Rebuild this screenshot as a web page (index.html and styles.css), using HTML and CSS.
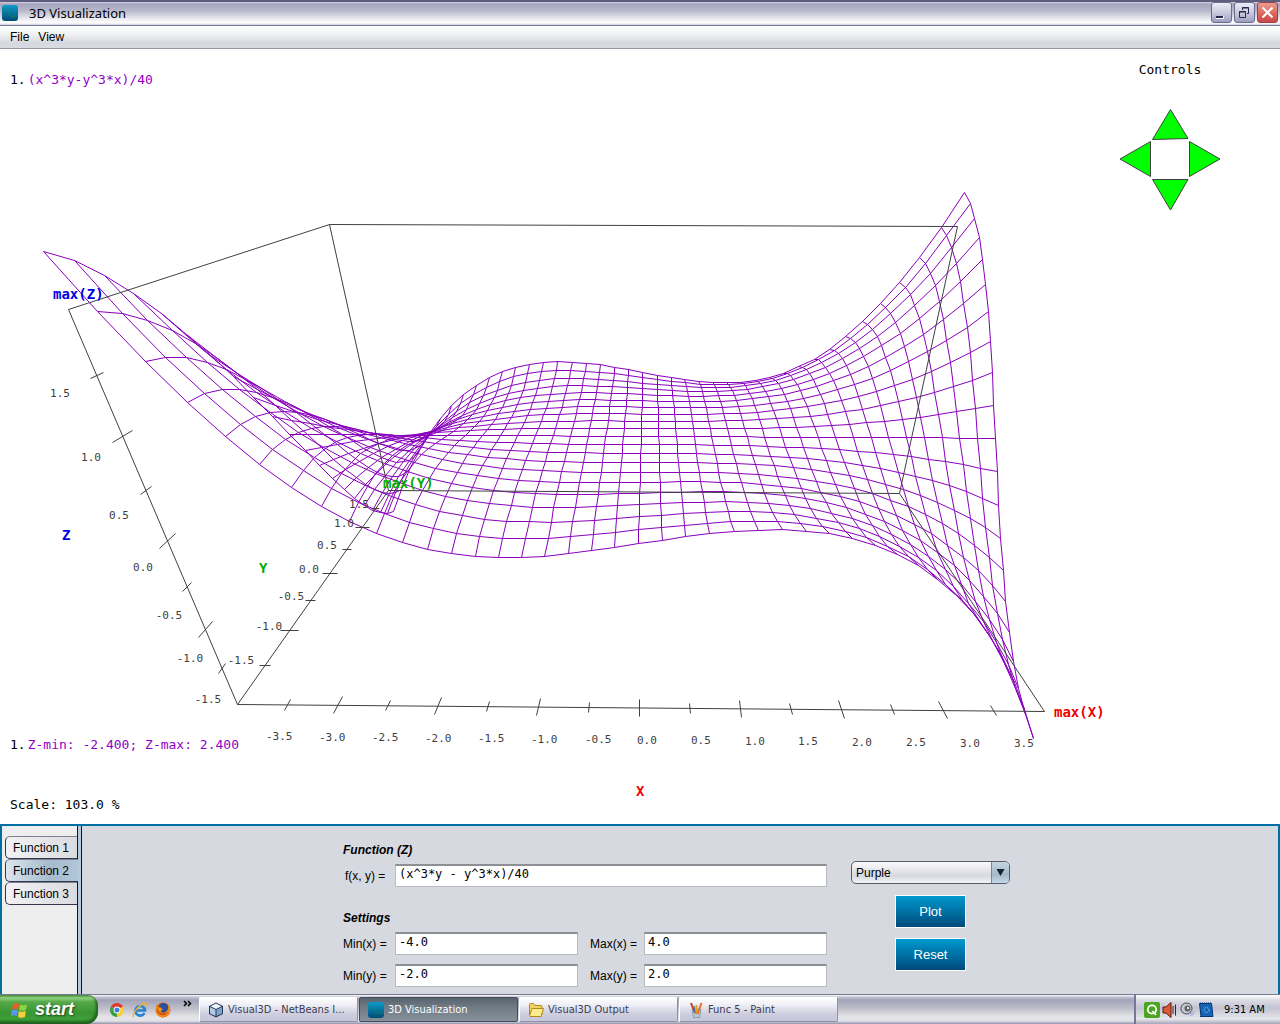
FILE: index.html
```
<!DOCTYPE html>
<html lang="en">
<head>
    <meta charset="UTF-8">
    <meta name="viewport" content="width=device-width, initial-scale=1.0">
    <title>3D Visualization</title>
    <link rel="stylesheet" href="styles.css">
</head>
<body>
    <header class="titlebar">
        <svg class="app-icon" viewBox="0 0 16 16"><use href="#appIcon"/></svg>
        <h1>3D Visualization</h1>
        <div class="window-buttons">
            <button type="button" class="win-btn" aria-label="Minimize">
                <svg viewBox="0 0 19 19"><path d="M4 13h8v3H4z" fill="#fff"/><path d="M4 13h7v2H4z" fill="#27294a"/></svg>
            </button>
            <button type="button" class="win-btn" aria-label="Restore">
                <svg viewBox="0 0 19 19" fill="none" stroke="#27294a"><path d="M7.500 7V4.500h6v6H12M7 5h7"/><path d="M4.500 8.500h6v6h-6zM4 9h7"/></svg>
            </button>
            <button type="button" class="win-btn win-close" aria-label="Close">
                <svg viewBox="0 0 19 19"><path d="M4.500 4.500l10 10M14.500 4.500l-10 10" stroke="#fff" stroke-width="2"/></svg>
            </button>
        </div>
    </header>

    <nav class="menubar">
        <button type="button">File</button>
        <button type="button">View</button>
    </nav>

    <main class="plot">
        <svg id="surface" class="surface" viewBox="0 49 1280 775"></svg>
        <p class="plot-text formula">1.<span>(x^3*y-y^3*x)/40</span></p>
        <p class="plot-text range">1.<span>Z-min: -2.400; Z-max: 2.400</span></p>
        <p class="plot-text scale">Scale: 103.0 %</p>
        <div class="controls">
            <p class="plot-text">Controls</p>
            <div class="pad">
                <button type="button" class="up" aria-label="Rotate up"><svg viewBox="0 0 38 32"><path d="M19.500 1.500L37 30.500L1.500 31.500z"/></svg></button>
                <button type="button" class="left" aria-label="Rotate left"><svg viewBox="0 0 32 38"><path d="M1 19L31.500 1.500V36.500z"/></svg></button>
                <button type="button" class="right" aria-label="Rotate right"><svg viewBox="0 0 32 38"><path d="M31 19L.5 1.500V36.500z"/></svg></button>
                <button type="button" class="down" aria-label="Rotate down"><svg viewBox="0 0 38 32"><path d="M19.500 31L37 .5H1.500z"/></svg></button>
            </div>
        </div>
    </main>

    <section class="panel">
        <div class="tabs">
            <button type="button">Function 1</button>
            <button type="button" class="selected">Function 2</button>
            <button type="button">Function 3</button>
        </div>
        <form class="settings">
            <div class="fields">
                <h2>Function (Z)</h2>
                <label for="fxy" class="indent">f(x, y) =</label>
                <input type="text" id="fxy" class="wide" value="(x^3*y - y^3*x)/40">
                <h2 class="second">Settings</h2>
                <label for="minX">Min(x) =</label>
                <input type="text" id="minX" value="-4.0">
                <label for="maxX" class="col-gap">Max(x) =</label>
                <input type="text" id="maxX" value="4.0">
                <label for="minY" class="row-gap">Min(y) =</label>
                <input type="text" id="minY" class="row-gap" value="-2.0">
                <label for="maxY" class="col-gap row-gap">Max(y) =</label>
                <input type="text" id="maxY" class="row-gap" value="2.0">
            </div>
            <div class="actions">
                <div class="combo">
                    <select aria-label="Colour">
                        <option>Purple</option>
                    </select>
                    <svg viewBox="0 0 17 21"><path d="M4.500 7h8l-4 7z" fill="#17222c"/></svg>
                </div>
                <button type="button">Plot</button>
                <button type="button">Reset</button>
            </div>
        </form>
    </section>

    <footer class="taskbar">
        <button type="button" class="start">
            <svg viewBox="0 0 18 18">
                <path d="M2 3.500q3-2 6-.5L7 8.500q-3-1.500-6 0z" fill="#e8602c"/>
                <path d="M9 3.500q3 1.500 7 0L15 9q-3 1.500-7 0z" fill="#8fd13f"/>
                <path d="M.8 9.500q3-1.500 6 0L5.800 15q-3-1.500-5.800 0z" fill="#5b94ee"/>
                <path d="M7.800 10q3 1.500 7 0L14 16q-4 1.500-7 0z" fill="#f7cf38"/>
            </svg>
            start
        </button>
        <div class="quick">
            <button type="button" aria-label="Chrome">
                <svg viewBox="0 0 16 16"><path d="M8 8L1.900 4.500A7 7 0 0 1 14.100 4.500z" fill="#dd3b2c"/><path d="M8 8L14.100 4.500A7 7 0 0 1 8 15z" fill="#f8cf35"/><path d="M8 8L8 15A7 7 0 0 1 1.900 4.500z" fill="#3c9e46"/><circle cx="8" cy="8" r="3.400" fill="#fff"/><circle cx="8" cy="8" r="2.500" fill="#3f7fd8"/></svg>
            </button>
            <button type="button" aria-label="Internet Explorer">
                <svg viewBox="0 0 16 16" fill="none"><path d="M12.500 11A4.800 4.800 0 1 1 13 8.500H4.500" stroke="#2583d8" stroke-width="2.600"/><path d="M1.500 15C-.5 12 7 3 12.500 1.500q3.500-.5 2 3" stroke="#f0b428" stroke-width="1.300"/></svg>
            </button>
            <button type="button" aria-label="Firefox">
                <svg viewBox="0 0 16 16"><circle cx="8" cy="8" r="7.500" fill="#e26a14"/><circle cx="8.500" cy="6" r="5" fill="#2c4f98"/><path d="M1 3q2 3 5 2.500L8 8q-3 .5-2 2 3 2 6-1 2-3 1-6 3 4 1.500 8-3 5-8 4.500Q0 13 1 3z" fill="#f28c1c"/><path d="M2 5q-1 6 4 8 5 1 7-3-4 2-7 1T2 5z" fill="#d24c10"/></svg>
            </button>
            <svg class="more" viewBox="0 0 9 7" fill="none" stroke="#000" stroke-width="1.500"><path d="M1 1l2.500 2.500L1 6M5 1l2.500 2.500L5 6"/></svg>
        </div>
        <div class="tasks">
            <button type="button">
                <svg viewBox="0 0 16 16"><path d="M8 .5l7 3.500v8l-7 3.500L1 12V4z" fill="#233a5c"/><path d="M8 1.500L13.500 4.200 8 7 2.500 4.200z" fill="#eef5fc"/><path d="M2 5l5.500 2.800V14L2 11.400z" fill="#b2cae4"/><path d="M14 5L8.500 7.800V14L14 11.400z" fill="#7fa2c8"/></svg>
                Visual3D - NetBeans I...
            </button>
            <button type="button" class="active">
                <svg viewBox="0 0 16 16">
                    <defs>
                        <linearGradient id="iconFill" x1="0" y1="0" x2="0" y2="1"><stop offset="0" stop-color="#0b9bcb"/><stop offset="1" stop-color="#034c74"/></linearGradient>
                        <g id="appIcon"><rect width="16" height="16" rx="3" fill="url(#iconFill)"/><path d="M1 7q3-6 6 1t8 1" fill="none" stroke="#20a03c" stroke-dasharray="1 1"/></g>
                    </defs>
                    <use href="#appIcon"/>
                </svg>
                3D Visualization
            </button>
            <button type="button">
                <svg viewBox="0 0 16 16"><path d="M1.500 12.500v-10q0-1 1-1h3l1.500 2h6q1 0 1 1v8z" fill="#f4d162" stroke="#b08a1c"/><path d="M1.500 14L4 6.500h11.500L13 14.500H2z" fill="#fdeb90" stroke="#b08a1c"/></svg>
                Visual3D Output
            </button>
            <button type="button">
                <svg viewBox="0 0 16 16"><path d="M4 7h9l-1.500 8.500h-6z" fill="#b4c6cf" stroke="#6f858f" stroke-width=".6"/><path d="M3 1l4 10" stroke="#c93a20" stroke-width="2"/><path d="M8.500 3l-.5 9" stroke="#e49b1d" stroke-width="2"/><path d="M13.500 1l-4 11" stroke="#e0702a" stroke-width="2"/><path d="M6 4l1 7" stroke="#3b70b8"/></svg>
                Func 5 - Paint
            </button>
        </div>
        <div class="tray">
            <svg viewBox="0 0 16 16"><rect width="16" height="16" rx="2" fill="#4ca520"/><circle cx="8" cy="7.500" r="4.200" fill="none" stroke="#fff" stroke-width="1.800"/><path d="M8.500 9l3.500 4" stroke="#fff" stroke-width="1.800"/></svg>
            <svg viewBox="0 0 16 16"><path d="M1 5h3l5-4.500v15L4 11H1z" fill="#dd5a3c" stroke="#5e1408"/><path d="M11 4v8M13.500 2.500v11" stroke="#3c2018"/></svg>
            <svg viewBox="0 0 16 16"><circle cx="6.500" cy="6.500" r="5.500" fill="#c5c8cc" stroke="#45484e"/><circle cx="7.500" cy="6.500" r="3" fill="#5c6066"/><circle cx="8" cy="6" r="1.200" fill="#e6e8ea"/><path d="M10 14q4-1 4-5M8 12.500q4 0 4-4" fill="none" stroke="#9ba3e4"/></svg>
            <svg viewBox="0 0 16 16"><path d="M1.500 1.500h12l1.500 13H3z" fill="#1565b4" stroke="#0a3470"/><path d="M2 1h12M2 14.500h13" stroke="#0a3470" stroke-dasharray="1 1"/><circle cx="8.500" cy="8" r="2.500" fill="none" stroke="#9cd2f6" stroke-dasharray="1 1"/></svg>
            <time>9:31 AM</time>
        </div>
    </footer>

    <script src="plot.js"></script>
</body>
</html>
```

FILE: styles.css
```
* {
    box-sizing: border-box;
}
body {
    margin: 0;
    min-height: 100vh;
    display: flex;
    flex-direction: column;
    background-color: white;
    font-family: "Liberation Sans", Arial, sans-serif;
    font-size: 12px;
    color: black;
}
h1, h2, p {
    margin: 0;
}
button {
    font: inherit;
    color: inherit;
    padding: 0;
    border: none;
    background: none;
}
svg {
    display: block;
}

/* title bar */
.titlebar {
    display: flex;
    align-items: center;
    height: 26px;
    padding: 0 2px 2px;
    border-top: 2px solid #5f5d7e;
    border-bottom: 1px solid #77779a;
    background: linear-gradient(#d5d5e2 0, #a5a4bf 2px, #b9b9cc 9px, #ececf2 17px, #ffffff 21px, #c9c9d8 23px);
}
.titlebar h1 {
    flex: 1;
    margin-left: 11px;
    font-family: "Noto Sans", sans-serif;
    font-size: 13px;
    line-height: 18px;
    font-weight: normal;
}
.app-icon {
    width: 16px;
    height: 16px;
}
.window-buttons {
    display: flex;
    gap: 2px;
}
.win-btn {
    width: 21px;
    height: 21px;
    border: 1px solid #6a6c94;
    border-radius: 3px;
    background: linear-gradient(#ededf6, #c2c3da 60%, #9c9dbd);
}
.win-close {
    border-color: #a13e48;
    background: linear-gradient(#eb9d90, #dc6359 60%, #c44a4c);
}

/* menu */
.menubar {
    display: flex;
    gap: 9px;
    height: 23px;
    padding: 0 10px;
    border-bottom: 1px solid #9297a1;
    background: linear-gradient(#ffffff, #eff0f2 40%, #d6d9df 75%, #d8dbe0);
}

/* plot area */
.plot {
    position: relative;
    flex: 1;
    display: flex;
}
.surface {
    flex: 1;
    min-width: 0;
    font-family: "DejaVu Sans Mono", monospace;
}
.mesh {
    fill: none;
    stroke: #8800bb;
}
.frame {
    fill: none;
    stroke: #404040;
}
.tick-label {
    font-size: 11px;
    text-anchor: middle;
    fill: #404040;
}
.x-label {
    text-anchor: start;
}
.axis-label {
    font-size: 14px;
    font-weight: bold;
}
.axis-x { fill: #f00000; }
.axis-y { fill: #00ac00; }
.axis-z { fill: #0000e6; }
.plot-text {
    font-family: "DejaVu Sans Mono", monospace;
    font-size: 13px;
    line-height: 16px;
}
.plot-text span {
    margin-left: 2px;
    color: #8f00c6;
}
.formula, .range, .scale {
    position: absolute;
    left: 10px;
}
.formula { top: 23px; }
.range { bottom: 71px; }
.scale { bottom: 11px; }
.controls {
    position: absolute;
    top: 13px;
    right: 59px;
    display: flex;
    flex-direction: column;
    align-items: center;
    gap: 30px;
}
.pad {
    display: grid;
    grid-template-columns: 32px 38px 32px;
    grid-template-rows: 32px 39px 32px;
    justify-items: center;
}
.pad path {
    fill: #00ff00;
    stroke: #404040;
}
.pad .up, .pad .down {
    grid-column: 2;
    width: 38px;
    height: 32px;
}
.pad .left, .pad .right {
    grid-row: 2;
    width: 32px;
    height: 38px;
}
.pad .left { grid-column: 1; }
.pad .right { grid-column: 3; }
.pad .up { grid-row: 1; }
.pad .down { grid-row: 3; }

/* function panel */
.panel {
    display: flex;
    border: 2px solid #0070a4;
    border-bottom: none;
    background-color: #d6d9df;
}
.tabs {
    width: 80px;
    padding: 10px 0 0 3px;
    border-right: 1px solid #101228;
    background: linear-gradient(to right, #eeeeee 75px, #101228 75px, #101228 76px, #b4cbdf 76px);
}
.tabs button {
    display: block;
    width: 72px;
    height: 23px;
    padding: 0 0 0 7px;
    border: 1px solid #30374e;
    border-top-color: #7d8090;
    border-right: none;
    border-radius: 5px 0 0 5px;
    text-align: left;
    background: linear-gradient(to right, #f2f2f4, #dadbe0);
}
.tabs .selected {
    width: 73px;
    background: linear-gradient(to right, #dce5ec, #a6bccd 60%, #b0c6d8);
}
.settings {
    flex: 1;
    display: flex;
    justify-content: center;
    gap: 24px;
    padding: 16px 7px 7px 0;
}
.fields {
    display: grid;
    grid-template-columns: 52px 183px 66px 183px;
    align-content: start;
    align-items: center;
}
.fields h2 {
    grid-column: 1 / -1;
    margin-bottom: 6px;
    font-size: 12px;
    line-height: 16px;
    font-style: italic;
}
.fields .second {
    margin-top: 23px;
}
.fields input {
    min-width: 0;
    height: 23px;
    padding: 0 3px 4px;
    border: 1px solid #b9bbc0;
    border-top: 2px solid #8d8f94;
    font-family: "DejaVu Sans Mono", monospace;
    font-size: 12px;
    background-color: white;
}
.fields .wide { grid-column: 2 / -1; }
.fields .indent { padding-left: 2px; }
.fields .col-gap { padding-left: 12px; }
.fields .row-gap { margin-top: 9px; }
.actions {
    width: 159px;
    padding-top: 19px;
    display: flex;
    flex-direction: column;
    align-items: center;
}
.actions button {
    width: 71px;
    height: 33px;
    margin-bottom: 10px;
    border: 1px solid white;
    font-size: 13px;
    color: white;
    background: linear-gradient(#0099cf, #004a7c);
}
.combo {
    display: flex;
    width: 159px;
    height: 23px;
    margin-bottom: 11px;
    border: 1px solid #565d69;
    border-radius: 5px;
    overflow: hidden;
    background: linear-gradient(#fbfbfc, #dfe1e5 50%, #d6d9df 65%, #f2f3f5);
}
.combo select {
    flex: 1;
    appearance: none;
    padding: 0 4px;
    border: none;
    border-right: 1px solid #6e8ba2;
    font: inherit;
    color: inherit;
    background: none;
}
.combo svg {
    width: 17px;
    height: 21px;
    background: linear-gradient(#c6d4e0, #a3b8ca 60%, #c4d9ea);
}
.actions button:last-child {
    margin-bottom: 0;
}

/* taskbar */
.taskbar {
    display: flex;
    height: 30px;
    border-top: 1px solid #77778f;
    font-family: "DejaVu Sans Condensed", "DejaVu Sans", sans-serif;
    font-size: 11px;
    background: linear-gradient(#ffffff 0, #c4c4d3 2px, #a3a3b9 5px, #bdbdca 13px, #e5e5e8 22px, #e2e2e8 26px, #8f8faa);
}
.start {
    display: flex;
    align-items: center;
    gap: 6px;
    width: 98px;
    padding-left: 11px;
    border-radius: 0 10px 12px 0;
    box-shadow: inset -2px -2px 3px #1f5f1f;
    font-family: "Liberation Sans", Arial, sans-serif;
    font-size: 18px;
    font-weight: bold;
    font-style: italic;
    color: white;
    text-shadow: 1px 1px 2px #1d471d;
    background: linear-gradient(#3f8c3a 0, #8fd07e 3px, #55a848 7px, #389632 18px, #3f9f38 24px, #236e22);
}
.start svg {
    width: 18px;
    height: 18px;
}
.quick {
    display: flex;
    align-items: center;
    gap: 7px;
    width: 101px;
    padding-left: 11px;
}
.quick button svg {
    width: 16px;
    height: 16px;
}
.quick .more {
    width: 9px;
    height: 7px;
    margin: 0 0 12px 5px;
}
.tasks {
    flex: 1;
    display: flex;
    gap: 1px;
    padding: 2px 0;
}
.tasks button {
    display: flex;
    align-items: center;
    gap: 4px;
    width: 159px;
    padding-left: 8px;
    border: 1px solid #8f8fa6;
    border-top-color: white;
    border-left-color: white;
    border-radius: 2px;
    white-space: nowrap;
    color: #3c3c50;
    background: linear-gradient(#ffffff, #eeeef5 30%, #cdcdde 70%, #c6c6da);
}
.tasks .active {
    border-color: #454b58;
    color: white;
    background: linear-gradient(#59636e, #6f7b85 40%, #86919a);
}
.tasks svg {
    width: 16px;
    height: 16px;
}
.tray {
    display: flex;
    align-items: center;
    gap: 2px;
    width: 146px;
    padding-left: 8px;
    border-left: 2px solid #77779a;
    background: linear-gradient(#ffffff, #dcdce6 5px, #c3c3d2 13px, #e7e7ec 24px, #a5a5bb);
}
.tray svg {
    width: 16px;
    height: 16px;
}
.tray time {
    margin-left: 8px;
}
```

FILE: plot.js
```
const svg = document.getElementById('surface');

// homogeneous screen positions of the box corners: [x, y, weight]
const ORIGIN = [237.5, 704.5, 1];
const MAX_X = [1044.5, 711, 0.992];
const MAX_Y = [388.5, 490.5, 1.578];
const MAX_Z = [68.5, 309.5, 0.707];

function f(x, y) {
    return (x ** 3 * y - y ** 3 * x) / 40;
}

// x in -4..4, y and z in -2..2
function project(x, y, z) {
    const a = (x + 4) / 8;
    const b = (y + 2) / 4;
    const c = (z + 2) / 4;
    const k = 1 - a - b - c;
    const w = k + a * MAX_X[2] + b * MAX_Y[2] + c * MAX_Z[2];
    return [0, 1].map(i => {
        const p = k * ORIGIN[i] + a * MAX_X[2] * MAX_X[i] + b * MAX_Y[2] * MAX_Y[i] + c * MAX_Z[2] * MAX_Z[i];
        return Math.floor(p / w) + 0.5;
    });
}

function line(points, className) {
    const el = document.createElementNS('http://www.w3.org/2000/svg', 'polyline');
    el.setAttribute('points', points.map(p => project(...p).join(',')).join(' '));
    el.setAttribute('class', className);
    svg.appendChild(el);
}

function text(str, x, y, className) {
    const el = document.createElementNS('http://www.w3.org/2000/svg', 'text');
    el.setAttribute('x', x);
    el.setAttribute('y', y);
    el.setAttribute('class', className);
    el.textContent = str;
    svg.appendChild(el);
}

// surface
for (let i = 0; i <= 40; i++) {
    const x = -4 + i / 5;
    const row = [];
    for (let j = 0; j <= 20; j++) {
        const y = -2 + j / 5;
        row.push([x, y, f(x, y)]);
    }
    line(row, 'mesh');
}
for (let j = 0; j <= 20; j++) {
    const y = -2 + j / 5;
    const row = [];
    for (let i = 0; i <= 40; i++) {
        const x = -4 + i / 5;
        row.push([x, y, f(x, y)]);
    }
    line(row, 'mesh');
}

// box
line([[4, -2, -2], [-4, -2, -2], [-4, -2, 2], [-4, 2, 2], [4, 2, 2], [4, 2, -2], [4, -2, -2]], 'frame');
line([[-4, -2, -2], [-4, 2, -2], [4, 2, -2]], 'frame');
line([[-4, 2, -2], [-4, 2, 2]], 'frame');

// ticks, the whole numbers get the longer ones
function tickSize(v) {
    return Number.isInteger(v) ? 0.1 : 0.06;
}
for (let x = -3.5; x <= 3.5; x += 0.5) {
    const t = tickSize(x);
    line([[x, -2 - t, -2], [x, -2 + t, -2]], 'frame');
}
for (let v = -1.5; v <= 1.5; v += 0.5) {
    const t = tickSize(v);
    line([[-4 - t, v, -2], [-4 + t, v, -2]], 'frame');
    line([[-4, -2 - t, v], [-4, -2 + t, v]], 'frame');
}

// labels
const xLabels = [266, 319, 372, 425, 478, 531, 585, 637, 691, 745, 798, 852, 906, 960, 1014];
const yLabels = [[241, 664], [269, 630], [291, 600], [309, 573], [327, 549], [344, 527], [359, 508]];
const zLabels = [[208, 703], [190, 662], [169, 619], [143, 571], [119, 519], [91, 461], [60, 397]];
xLabels.forEach((x, i) => text((-3.5 + i / 2).toFixed(1), x, 740 + Math.round(i / 2), 'tick-label x-label'));
yLabels.forEach((p, i) => text((-1.5 + i / 2).toFixed(1), p[0], p[1], 'tick-label'));
zLabels.forEach((p, i) => text((-1.5 + i / 2).toFixed(1), p[0], p[1], 'tick-label'));

text('X', 636, 796, 'axis-label axis-x');
text('Y', 259, 573, 'axis-label axis-y');
text('Z', 62, 540, 'axis-label axis-z');
text('max(X)', 1054, 717, 'axis-label axis-x');
text('max(Y)', 383, 488, 'axis-label axis-y');
text('max(Z)', 53, 299, 'axis-label axis-z');
```
